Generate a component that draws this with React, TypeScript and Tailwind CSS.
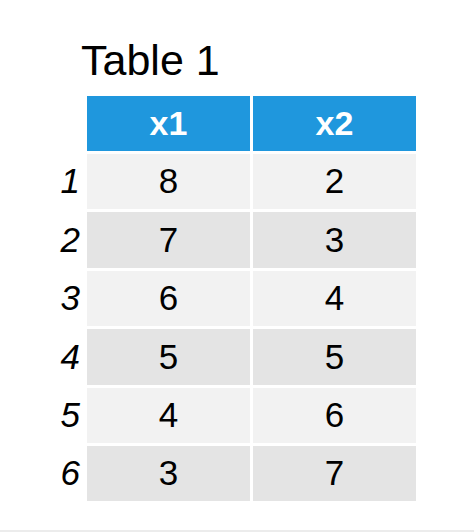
const rows: [number, number][] = [
  [8, 2],
  [7, 3],
  [6, 4],
  [5, 5],
  [4, 6],
  [3, 7],
];

export default function App() {
  return (
    <div className="w-[474px] h-[532px] bg-white relative overflow-hidden font-['Liberation_Sans',Arial,sans-serif] text-black">
      <div className="pt-[39px]">
        <h1 className="ml-[81px] text-[43px] leading-none font-normal">Table 1</h1>
        <div className="mt-[13.7px] grid grid-cols-[84px_163px_163px] gap-x-[3px] gap-y-[3.1px] auto-rows-[55.3px]">
          <div />
          <div className="bg-[#1f97dd] text-white font-bold text-[34px] flex items-center justify-center">x1</div>
          <div className="bg-[#1f97dd] text-white font-bold text-[34px] flex items-center justify-center">x2</div>
          {rows.map(([a, b], i) => {
            const bg = i % 2 === 0 ? "bg-[#f2f2f2]" : "bg-[#e4e4e4]";
            return [
              <div key={`l${i}`} className="italic text-[35px] flex items-center justify-end pr-[4px]">
                {i + 1}
              </div>,
              <div key={`a${i}`} className={`${bg} text-[35px] flex items-center justify-center`}>
                {a}
              </div>,
              <div key={`b${i}`} className={`${bg} text-[35px] flex items-center justify-center`}>
                {b}
              </div>,
            ];
          })}
        </div>
      </div>
      <div className="absolute left-0 right-0 bottom-0 h-[2px] bg-[#ececec]" />
    </div>
  );
}
